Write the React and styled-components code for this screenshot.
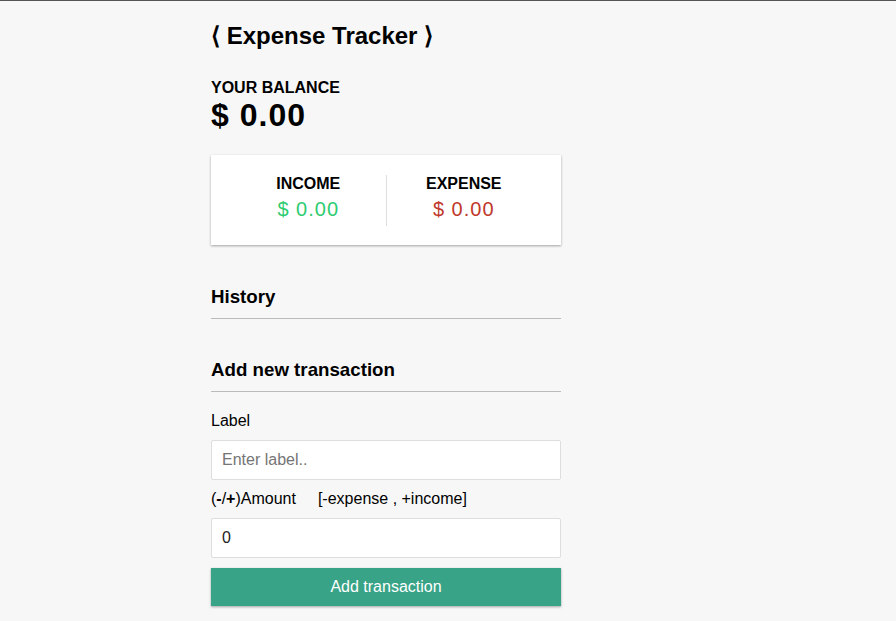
import styled, { createGlobalStyle } from 'styled-components';

const GlobalStyle = createGlobalStyle`
  * {
    box-sizing: border-box;
  }
  body {
    margin: 0;
    background-color: #f7f7f7;
    font-family: "Liberation Sans", Arial, sans-serif;
    font-size: 16px;
    color: #000;
  }
`;

const Page = styled.div`
  min-height: 100vh;
  border-top: 1px solid #555;
  padding-left: 211px;
`;

const Container = styled.div`
  width: 350px;
  padding-top: 21px;
`;

const Title = styled.h2`
  margin: 0 0 29px;
  font-size: 24px;
  font-weight: bold;
`;

const Caption = styled.h4`
  margin: 0;
  font-size: 16px;
  text-transform: uppercase;
`;

const Balance = styled.h1`
  margin: 0;
  font-size: 32px;
  letter-spacing: 1px;
`;

const IncExpCard = styled.div`
  display: flex;
  margin: 21px 0 0;
  padding: 20px 20px 19px;
  background-color: #fff;
  box-shadow: 0 1px 3px rgba(0, 0, 0, 0.12), 0 1px 2px rgba(0, 0, 0, 0.24);
`;

const IncExpColumn = styled.div`
  flex: 1;
  text-align: center;
  &:first-of-type {
    border-right: 1px solid #dedede;
  }
`;

const Money = styled.p`
  margin: 5px 0;
  font-size: 20px;
  letter-spacing: 1px;
  color: ${({ $type }) => ($type === 'plus' ? '#2ecc71' : '#c0392b')};
`;

const SectionTitle = styled.h3`
  margin: ${({ $first }) => ($first ? '41px 0 10px' : '40px 0 10px')};
  padding-bottom: 10px;
  font-size: 18.72px;
  border-bottom: 1px solid #bbb;
`;

const List = styled.ul`
  list-style: none;
  margin: 0;
  padding: 0;
`;

const FormControl = styled.div``;

const Label = styled.label`
  display: inline-block;
  margin: 10px 0;
  b {
    font-weight: bold;
  }
`;

const Hint = styled.span`
  margin-left: 22px;
`;

const Input = styled.input`
  display: block;
  width: 100%;
  height: 40px;
  padding: 10px;
  font-family: inherit;
  font-size: 16px;
  color: #222;
  background: #fff;
  border: 1px solid #dedede;
  border-radius: 2px;
  outline: none;
  &::placeholder {
    color: #757575;
  }
`;

const Button = styled.button`
  display: block;
  width: 100%;
  margin: 10px 0 30px;
  padding: 10px;
  font-family: inherit;
  font-size: 16px;
  color: #fff;
  background-color: #38a386;
  border: 0;
  cursor: pointer;
  box-shadow: 0 1px 3px rgba(0, 0, 0, 0.12), 0 1px 2px rgba(0, 0, 0, 0.24);
`;

const App = () => {
  return (
    <Page>
      <GlobalStyle />
      <Container>
        <Title>⟨ Expense Tracker ⟩</Title>
        <Caption>Your Balance</Caption>
        <Balance>$ 0.00</Balance>
        <IncExpCard>
          <IncExpColumn>
            <Caption>Income</Caption>
            <Money $type="plus">$ 0.00</Money>
          </IncExpColumn>
          <IncExpColumn>
            <Caption>Expense</Caption>
            <Money $type="minus">$ 0.00</Money>
          </IncExpColumn>
        </IncExpCard>
        <SectionTitle $first>History</SectionTitle>
        <List />
        <SectionTitle>Add new transaction</SectionTitle>
        <form onSubmit={(e) => e.preventDefault()}>
          <FormControl>
            <Label htmlFor="text">Label</Label>
            <Input type="text" id="text" placeholder="Enter label.." />
          </FormControl>
          <FormControl>
            <Label htmlFor="amount">
              (<b>-</b>/<b>+</b>)Amount<Hint>[-expense , +income]</Hint>
            </Label>
            <Input type="number" id="amount" defaultValue="0" />
          </FormControl>
          <Button>Add transaction</Button>
        </form>
      </Container>
    </Page>
  );
};

export default App;
